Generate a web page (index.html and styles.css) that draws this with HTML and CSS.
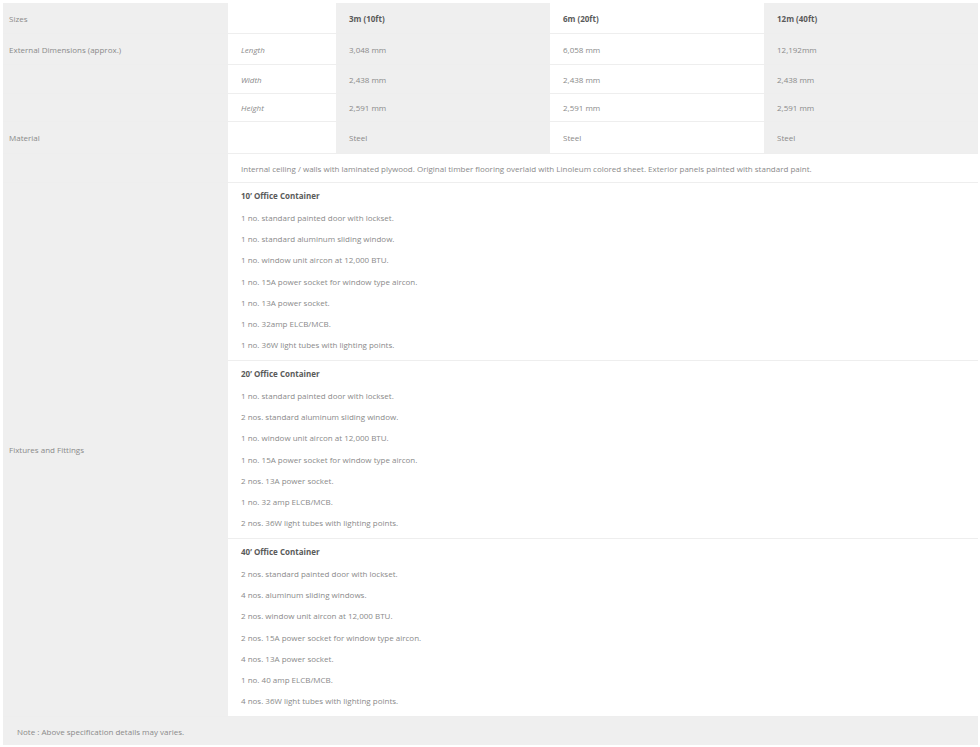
FILE: index.html
```html
<!DOCTYPE html>
<html lang="en">
<head>
<meta charset="utf-8">
<title>Office Container Specifications</title>
<link rel="stylesheet" href="styles.css">
</head>
<body>
<div class="wrap">
<table class="spec">
  <colgroup>
    <col class="c-label">
    <col class="c-sub">
    <col class="c-size">
    <col class="c-size">
    <col class="c-size">
  </colgroup>
  <tbody>
    <tr class="r-sizes">
      <td class="g lab">Sizes</td>
      <td class="w"></td>
      <td class="g head">3m (10ft)</td>
      <td class="w head">6m (20ft)</td>
      <td class="g head">12m (40ft)</td>
    </tr>
    <tr class="r-len">
      <td class="g lab">External Dimensions (approx.)</td>
      <td class="w sub">Length</td>
      <td class="g">3,048 mm</td>
      <td class="w">6,058 mm</td>
      <td class="g">12,192mm</td>
    </tr>
    <tr class="r-wid">
      <td class="g lab"></td>
      <td class="w sub">Width</td>
      <td class="g">2,438 mm</td>
      <td class="w">2,438 mm</td>
      <td class="g">2,438 mm</td>
    </tr>
    <tr class="r-hei">
      <td class="g lab"></td>
      <td class="w sub">Height</td>
      <td class="g">2,591 mm</td>
      <td class="w">2,591 mm</td>
      <td class="g">2,591 mm</td>
    </tr>
    <tr class="r-mat">
      <td class="g lab">Material</td>
      <td class="w"></td>
      <td class="g">Steel</td>
      <td class="w">Steel</td>
      <td class="g">Steel</td>
    </tr>
    <tr class="r-desc">
      <td class="g lab"></td>
      <td class="w" colspan="4">Internal ceiling / walls with laminated plywood. Original timber flooring overlaid with Linoleum colored sheet. Exterior panels painted with standard paint.</td>
    </tr>
    <tr class="r-fix">
      <td class="g lab" rowspan="3">Fixtures and Fittings</td>
      <td class="w list" colspan="4">
        <div class="line title">10’ Office Container</div>
        <div class="line">1 no. standard painted door with lockset.</div>
        <div class="line">1 no. standard aluminum sliding window.</div>
        <div class="line">1 no. window unit aircon at 12,000 BTU.</div>
        <div class="line">1 no. 15A power socket for window type aircon.</div>
        <div class="line">1 no. 13A power socket.</div>
        <div class="line">1 no. 32amp ELCB/MCB.</div>
        <div class="line">1 no. 36W light tubes with lighting points.</div>
      </td>
    </tr>
    <tr class="r-fix2">
      <td class="w list" colspan="4">
        <div class="line title">20’ Office Container</div>
        <div class="line">1 no. standard painted door with lockset.</div>
        <div class="line">2 nos. standard aluminum sliding window.</div>
        <div class="line">1 no. window unit aircon at 12,000 BTU.</div>
        <div class="line">1 no. 15A power socket for window type aircon.</div>
        <div class="line">2 nos. 13A power socket.</div>
        <div class="line">1 no. 32 amp ELCB/MCB.</div>
        <div class="line">2 nos. 36W light tubes with lighting points.</div>
      </td>
    </tr>
    <tr class="r-fix3">
      <td class="w list" colspan="4">
        <div class="line title">40’ Office Container</div>
        <div class="line">2 nos. standard painted door with lockset.</div>
        <div class="line">4 nos. aluminum sliding windows.</div>
        <div class="line">2 nos. window unit aircon at 12,000 BTU.</div>
        <div class="line">2 nos. 15A power socket for window type aircon.</div>
        <div class="line">4 nos. 13A power socket.</div>
        <div class="line">1 no. 40 amp ELCB/MCB.</div>
        <div class="line">4 nos. 36W light tubes with lighting points.</div>
      </td>
    </tr>
    <tr class="r-note">
      <td class="g note" colspan="5">Note : Above specification details may varies.</td>
    </tr>
  </tbody>
</table>
</div>
</body>
</html>
```

FILE: styles.css
```css
html, body {
  margin: 0;
  padding: 0;
  background: #ffffff;
}
.wrap {
  padding: 3px 2px 2px 3px;
}
.spec {
  width: 975px;
  table-layout: fixed;
  border-collapse: collapse;
  font-family: "Open Sans", "Liberation Sans", sans-serif;
  font-size: 8px;
  color: #8a8a8a;
}
.c-label { width: 225px; }
.c-sub { width: 108px; }
.c-size { width: 214px; }
.spec td {
  padding: 0 12px 0 13px;
  border-top: 1px solid #eeeeee;
  vertical-align: middle;
  white-space: nowrap;
}
.spec tr:first-child td { border-top: 0; }
.spec td.g { background: #efefef; }
.spec td.w { background: #ffffff; }
.spec td.lab { padding-left: 6px; }
.spec td.head { font-weight: 700; color: #5a5a5a; }
.spec td.sub { font-style: italic; }
.r-sizes td { height: 30px; }
.r-len td { height: 30px; }
.r-wid td { height: 28px; }
.r-hei td { height: 27px; }
.r-mat td { height: 31px; }
.r-desc td { height: 28px; }
.spec td.list {
  padding-top: 2px;
  padding-bottom: 4px;
  height: 171px;
}
.line {
  line-height: 21.33px;
  height: 21.33px;
}
.line.title { font-weight: 700; color: #5a5a5a; }
.spec tr.r-note td.note {
  height: 28px;
  padding-left: 14px;
}
```
